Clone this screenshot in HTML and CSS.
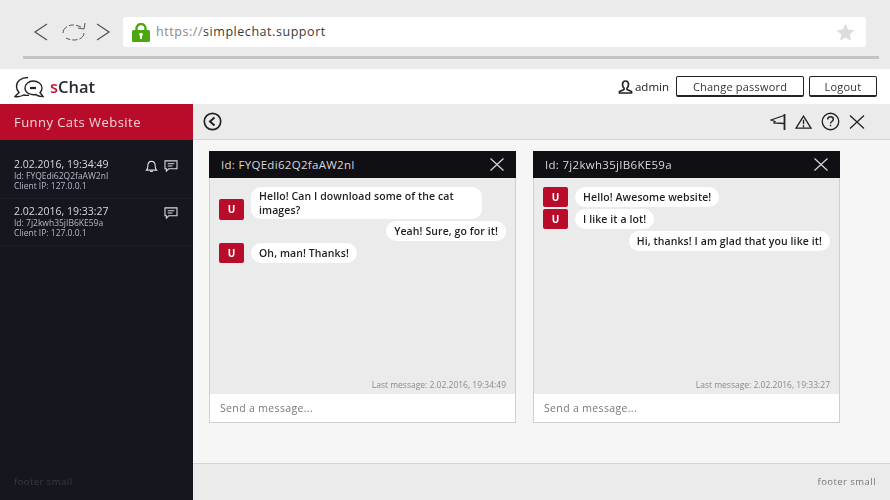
FILE: index.html
```html
<!DOCTYPE html>
<html lang="en">
<head>
<meta charset="utf-8">
<title>sChat</title>
<link rel="stylesheet" href="styles.css">
</head>
<body>
<div class="browser">
  <div class="browser-row">
    <svg class="nav-icon" width="16" height="20" viewBox="0 0 16 20"><path d="M14 2 2 10l12 8" class="ln"/></svg>
    <svg class="nav-icon reload" width="28" height="20" viewBox="0 0 28 20"><path d="M3 11c0-4 4-8 10-8 3 0 6 1 8 2M24 11c0 4-4 7-10 7-4 0-6-1-8-2" class="ln dash"/><path d="M25 1l-1 6-6-1" class="ln thin"/></svg>
    <svg class="nav-icon" width="16" height="20" viewBox="0 0 16 20"><path d="m2 2 12 8-12 8" class="ln"/></svg>
    <div class="url">
      <svg width="18" height="19" viewBox="0 0 18 19"><path d="M4.500 8V5.500a4.500 4.500 0 0 1 9 0V8" fill="none" stroke="#4aa80f" stroke-width="2.400"/><rect y="7" width="18" height="12" rx="1.500" fill="#4aa80f"/><circle cx="9" cy="11.500" r="1.800" fill="#fff"/><rect x="8" y="12" width="2" height="4" fill="#fff"/></svg>
      <span class="url-text"><span class="url-dim">https://</span>simplechat.support</span>
      <svg class="star" width="19" height="18" viewBox="0 0 24 23"><path d="m12 1 3.400 7.400 7.900.900-5.900 5.400 1.700 7.900L12 18.600l-7.100 4 1.700-7.900L.700 9.300l7.900-.900z" fill="#dcdcdc"/></svg>
    </div>
  </div>
  <div class="browser-line"></div>
</div>

<header class="topbar">
  <div class="brand">
    <svg width="31" height="22" viewBox="0 0 31 22"><path d="M14 1.500C7 1.500 2.500 5 2.500 10.500c0 2.500 1 4.500 2.500 6L1 20.500c3 .5 6 0 8.500-1.500 1.500.5 3.500.5 5.500.3" fill="none" stroke="#222" stroke-width="1.400"/><path d="M19 5c5 0 9 3 9 7 0 2-1 3.500-2 4.500l3 4c-3 0-5.500-.5-7-2-5 1-11-1.500-11-6.500 0-4 4-7 8-7z" fill="#fff" stroke="#222" stroke-width="1.400"/><path d="M16 12h6" stroke="#222" stroke-width="2.200"/></svg>
    <span class="brand-name"><span class="brand-s">s</span>Chat</span>
  </div>
  <div class="account">
    <svg width="15" height="14" viewBox="0 0 15 14"><path d="M7.500 1C5.500 1 4.500 2.500 4.500 4.500c0 1.500.7 3 1.500 3.600V9.500L1.500 11.500V13h12v-1.500L9 9.500V8.100c.8-.6 1.500-2.100 1.500-3.600C10.500 2.500 9.500 1 7.500 1z" fill="none" stroke="#222" stroke-width="1.700"/></svg>
    <span class="admin">admin</span>
    <button class="btn btn-pass">Change password</button>
    <button class="btn btn-logout">Logout</button>
  </div>
</header>

<div class="app">
  <aside class="sidebar">
    <div class="site">Funny Cats Website</div>
    <div class="sessions">
      <div class="session">
        <div class="session-text">
          <div class="session-time">2.02.2016, 19:34:49</div>
          <div class="session-meta">Id: FYQEdi62Q2faAW2nI</div>
          <div class="session-meta">Client IP: 127.0.0.1</div>
        </div>
        <div class="session-icons">
          <svg width="13" height="12" viewBox="0 0 14 13"><path d="M1.500 11h11c-1-1-1.500-2-1.500-4.500C11 3.500 9.500 1.500 7 1.500S3 3.500 3 6.500C3 9 2.500 10 1.500 11zM5.500 12.500h3" fill="none" stroke="#d8dbe2" stroke-width="1.200"/></svg>
          <svg width="14" height="12" viewBox="0 0 15 13"><path d="M1 1h13v8.500H5L2.500 12V9.500H1zM4 4h7M4 6.500h5" fill="none" stroke="#d8dbe2" stroke-width="1.200"/></svg>
        </div>
      </div>
      <div class="session">
        <div class="session-text">
          <div class="session-time">2.02.2016, 19:33:27</div>
          <div class="session-meta">Id: 7j2kwh35jIB6KE59a</div>
          <div class="session-meta">Client IP: 127.0.0.1</div>
        </div>
        <div class="session-icons">
          <svg width="14" height="12" viewBox="0 0 15 13"><path d="M1 1h13v8.500H5L2.500 12V9.500H1zM4 4h7M4 6.500h5" fill="none" stroke="#d8dbe2" stroke-width="1.200"/></svg>
        </div>
      </div>
    </div>
    <div class="side-foot">footer small</div>
  </aside>

  <div class="main">
    <div class="toolbar">
      <svg width="19" height="19" viewBox="0 0 19 19"><circle cx="9.500" cy="9.500" r="8.200" fill="none" stroke="#222" stroke-width="1.700"/><path d="M11.500 5.500 7 9.500l4.500 4" fill="none" stroke="#222" stroke-width="2"/></svg>
      <div class="tools">
        <svg width="16" height="16" viewBox="0 0 16 16"><path d="M14.500 0v16" stroke="#222" stroke-width="1.800" fill="none"/><path d="M14 1.500 1 6l4 1.500-1 1.500 10 .5" fill="none" stroke="#222" stroke-width="1.300"/></svg>
        <svg width="17" height="14" viewBox="0 0 18 15"><path d="M9 1.200 17 14H1zM9 5v5M9 11v2" fill="none" stroke="#222" stroke-width="1.400"/></svg>
        <svg width="19" height="19" viewBox="0 0 20 20"><circle cx="10" cy="10" r="8.700" fill="none" stroke="#222" stroke-width="1.400"/><path d="M7 8c0-2 1.300-3 3-3s3 1 3 2.600c0 2.400-3 2.400-3 4.400M10 13.500V15" fill="none" stroke="#222" stroke-width="1.500"/></svg>
        <svg width="16" height="14" viewBox="0 0 16 14"><path d="m1 .500 14 13M15 .500l-14 13" stroke="#222" stroke-width="1.300"/></svg>
      </div>
    </div>
    <div class="workspace">
      <section class="chat">
        <div class="chat-head"><span>Id: FYQEdi62Q2faAW2nI</span><svg width="14" height="13" viewBox="0 0 14 13"><path d="m.500.500 13 12M13.500.500l-13 12" stroke="#d8d8d8" stroke-width="1.200"/></svg></div>
        <div class="chat-body">
          <div class="msg">
            <div class="avatar avatar-low">U</div>
            <div class="bubble wide">Hello! Can I download some of the cat images?</div>
          </div>
          <div class="msg mine"><div class="bubble">Yeah! Sure, go for it!</div></div>
          <div class="msg">
            <div class="avatar">U</div>
            <div class="bubble">Oh, man! Thanks!</div>
          </div>
          <div class="last">Last message: 2.02.2016, 19:34:49</div>
        </div>
        <div class="chat-input">Send a message...</div>
      </section>
      <section class="chat">
        <div class="chat-head"><span>Id: 7j2kwh35jIB6KE59a</span><svg width="14" height="13" viewBox="0 0 14 13"><path d="m.500.500 13 12M13.500.500l-13 12" stroke="#d8d8d8" stroke-width="1.200"/></svg></div>
        <div class="chat-body">
          <div class="msg">
            <div class="avatar">U</div>
            <div class="bubble">Hello! Awesome website!</div>
          </div>
          <div class="msg">
            <div class="avatar">U</div>
            <div class="bubble">I like it a lot!</div>
          </div>
          <div class="msg mine"><div class="bubble">Hi, thanks! I am glad that you like it!</div></div>
          <div class="last">Last message: 2.02.2016, 19:33:27</div>
        </div>
        <div class="chat-input">Send a message...</div>
      </section>
    </div>
    <footer class="foot">footer small</footer>
  </div>
</div>
</body>
</html>
```
FILE: styles.css
```css
* { box-sizing: border-box; }
html, body { margin: 0; height: 100%; }
body {
  width: 890px;
  height: 500px;
  overflow: hidden;
  display: flex;
  flex-direction: column;
  font-family: "Open Sans", sans-serif;
  color: #222;
  background: #fff;
  filter: blur(.35px);
}
svg { display: block; flex: none; }

.browser { height: 69px; flex: none; background: #ebebeb; padding: 17px 11px 0 23px; }
.browser-row { display: flex; align-items: center; height: 30px; padding-left: 10px; }
.ln { fill: none; stroke: #555; stroke-width: 1.300; }
.dash { stroke-dasharray: 8 2 5 2; stroke-width: 1; }
.thin { stroke-width: 1; }
.nav-icon { margin-right: 5px; }
.reload { margin: 0 7px 0 6px; }
.url {
  margin-left: 2px;
  flex: 1;
  margin-right: 13px;
  height: 30px;
  background: #fff;
  border-radius: 3px;
  display: flex;
  align-items: center;
  padding: 0 11px 0 9px;
}
.nav-icon + .url { margin-left: 7px; }
.url-text { margin-left: 6px; margin-bottom: 2px; font-size: 12.500px; letter-spacing: .55px; color: #3a3a3a; flex: 1; }
.url-dim { color: #888; }
.browser-line { height: 3px; margin-top: 9px; background: #c4c4c4; }

.topbar {
  height: 35px;
  flex: none;
  display: flex;
  justify-content: space-between;
  align-items: center;
  padding: 0 13px 0 14px;
}
.brand { display: flex; align-items: center; gap: 5px; }
.brand-name { font-size: 16.500px; font-weight: 600; color: #2a2a30; }
.brand-s { color: #c8172f; }
.account { display: flex; align-items: center; }
.admin { font-size: 11.500px; margin: 0 7px 0 2px; color: #222; }
.btn {
  height: 21px;
  background: #fff;
  border: 1px solid #222;
  border-bottom-width: 2px;
  border-radius: 2px;
  padding: 0;
  font: 11px "Open Sans", sans-serif;
  color: #333;
  letter-spacing: .2px;
}
.btn-pass { width: 128px; margin-right: 5px; }
.btn-logout { width: 68px; }

.app { flex: 1; display: flex; min-height: 0; }
.sidebar { width: 193px; flex: none; background: #16161e; display: flex; flex-direction: column; }
.site {
  height: 36px;
  flex: none;
  background: #b80c2a;
  color: #f2d5da;
  font-size: 13px;
  letter-spacing: .45px;
  line-height: 37px;
  padding-left: 14px;
}
.sessions { padding-top: 12px; }
.session {
  display: flex;
  justify-content: space-between;
  height: 47px;
  padding: 6px 15px 0 14px;
  border-bottom: 1px solid #1c1c24;
}
.session-time { font-size: 10.500px; line-height: 12px; margin-bottom: 1px; color: #d5d9e2; }
.session-meta { font-size: 8.500px; line-height: 10px; color: #b4bac8; }
.session-icons { display: flex; gap: 6px; margin-top: 2px; }
.side-foot { margin-top: auto; padding: 0 0 12px 14px; font-size: 9.500px; letter-spacing: .45px; color: #3a3a44; }

.main { flex: 1; display: flex; flex-direction: column; min-width: 0; background: #f6f6f6; }
.toolbar {
  height: 36px;
  flex: none;
  background: #ebebeb;
  border-bottom: 1px solid #d4d4d4;
  display: flex;
  align-items: center;
  justify-content: space-between;
  padding: 0 25px 0 10px;
}
.tools { display: flex; align-items: center; gap: 9px; }
.workspace { flex: 1; display: flex; gap: 17px; padding: 11px 0 0 16px; min-height: 0; }
.chat {
  width: 307px;
  height: 272px;
  display: flex;
  flex-direction: column;
  border: 1px solid #cfcfcf;
  border-top: 0;
  background: #ebebeb;
}
.chat-head {
  height: 27px;
  flex: none;
  margin: 0 -1px;
  background: #101014;
  color: #d8d8dc;
  font-size: 11.500px;
  letter-spacing: .3px;
  display: flex;
  align-items: center;
  justify-content: space-between;
  padding: 0 12px;
}
.chat-body {
  flex: 1;
  display: flex;
  flex-direction: column;
  gap: 2px;
  padding: 9px 9px 0;
  min-height: 0;
}
.msg { display: flex; align-items: center; gap: 7px; }
.mine { justify-content: flex-end; }
.avatar {
  width: 25px;
  height: 20px;
  flex: none;
  background: #b80c2a;
  border-radius: 2px;
  color: #fff;
  font-size: 10px;
  font-weight: 700;
  text-align: center;
  line-height: 20px;
}
.avatar-low { align-self: flex-end; height: 21px; margin-bottom: -1px; }
.bubble {
  background: #fff;
  border-radius: 10px;
  font-size: 10.500px;
  font-weight: 600;
  line-height: 14px;
  letter-spacing: .1px;
  padding: 3px 8px;
  color: #1e1e1e;
}
.wide { width: 231px; padding-top: 2px; padding-bottom: 2px; }
.last { margin-top: auto; padding: 0 0 3px; text-align: right; font-size: 8.500px; line-height: 12px; color: #8a8a8a; }
.chat-input {
  height: 28px;
  flex: none;
  background: #fff;
  font-size: 10.500px;
  letter-spacing: .35px;
  line-height: 29px;
  padding-left: 10px;
  color: #777;
}
.foot {
  height: 37px;
  flex: none;
  background: #ebebeb;
  border-top: 1px solid #d4d4d4;
  text-align: right;
  font-size: 9.500px;
  letter-spacing: .45px;
  line-height: 36px;
  padding-right: 14px;
  color: #777;
}
```
